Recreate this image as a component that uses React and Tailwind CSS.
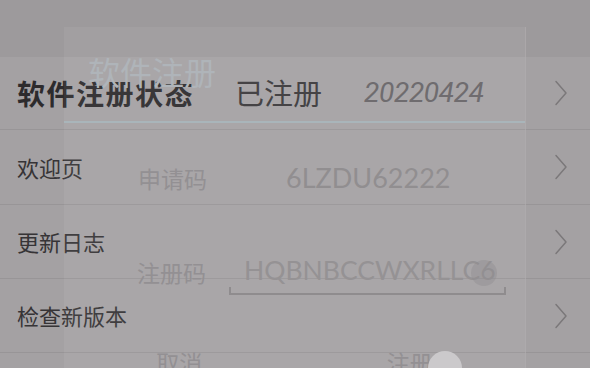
const cjk = { fontFamily: '"Noto Sans CJK SC", "Noto Sans", sans-serif' }
const latin = { fontFamily: 'Lato, "Noto Sans", sans-serif' }

const rows = [
  { label: '欢迎页', h: 'h-[75px]' },
  { label: '更新日志', h: 'h-[74px]' },
  { label: '检查新版本', h: 'h-[74px]' },
]

function Chevron() {
  return (
    <svg width="14" height="26" viewBox="0 0 14 26" className="shrink-0">
      <path d="M2 1.5 L12 13 L2 24.5" fill="none" stroke="#7b787a" strokeWidth="1.5" strokeLinecap="round" strokeLinejoin="round" />
    </svg>
  )
}

export default function App() {
  return (
    <div className="relative w-[590px] h-[368px] overflow-hidden bg-[#a4a1a3]" style={cjk}>

      {/* settings list */}
      <div className="h-[57px] bg-[#9d9a9c]" />
      <div className="h-[73px] flex items-center pl-[17px] pr-[22px] border-b border-[#989597]">
        <span className="text-[28px] font-bold text-[#2d2b2d] tracking-[1.5px]">软件注册状态</span>
        <span className="ml-[41px] text-[29px] text-[#3b393b]">已注册</span>
        <span className="ml-[42px] text-[28px] italic text-[#676467] tracking-[-0.3px]" style={{ fontFamily: 'Roboto, sans-serif' }}>20220424</span>
        <div className="flex-1" />
        <Chevron />
      </div>
      {rows.map(r => (
        <div key={r.label} className={`${r.h} flex items-center pl-[17px] pr-[22px] border-b border-[#989597]`}>
          <span className="text-[22px] text-[#363436]">{r.label}</span>
          <div className="flex-1" />
          <Chevron />
        </div>
      ))}

      {/* fading dialog */}
      <div className="absolute left-[64px] top-[27px] w-[462px] bottom-0 bg-[#ffffff]/[0.05] border-r border-[#b0adaf]/60">
        <div className="h-[96px] pl-[24px] pt-[24px] border-b-2 border-[#a9b5ba]">
          <span className="text-[32px] leading-[40px] text-[#afb4b9]">软件注册</span>
        </div>
        <div className="h-[110px] flex items-center">
          <span className="ml-[74px] text-[23px] text-[#939093]">申请码</span>
          <span className="ml-[79px] text-[27px] text-[#918e90]" style={latin}>6LZDU62222</span>
        </div>
        <div className="h-[64px] flex items-start pt-[18px]">
          <span className="ml-[73px] mt-[4px] text-[23px] text-[#939093]">注册码</span>
          <div className="relative ml-[23px] w-[277px] h-[44px] border-b-2 border-[#8f8c8e]">
            <div className="absolute left-0 bottom-0 w-[2px] h-[6px] bg-[#8f8c8e]" />
            <div className="absolute right-0 bottom-0 w-[2px] h-[6px] bg-[#8f8c8e]" />
            <span className="block pl-[15px] text-[26.5px] leading-[38px] text-[#959294]" style={latin}>HQBNBCCWXRLLC6</span>
            <div className="absolute left-[242px] top-[9px] w-[26px] h-[26px] rounded-full bg-[#8f8c8e]/40" />
          </div>
        </div>
        <div className="grid grid-cols-2 pt-[48px]">
          <span className="text-center text-[23px] text-[#939093]">取消</span>
          <span className="text-center text-[23px] text-[#939093]">注册</span>
        </div>
        <div className="absolute left-[364px] top-[324px] w-[34px] h-[34px] rounded-full bg-[#cbc9cb]" />
      </div>
    </div>
  )
}
